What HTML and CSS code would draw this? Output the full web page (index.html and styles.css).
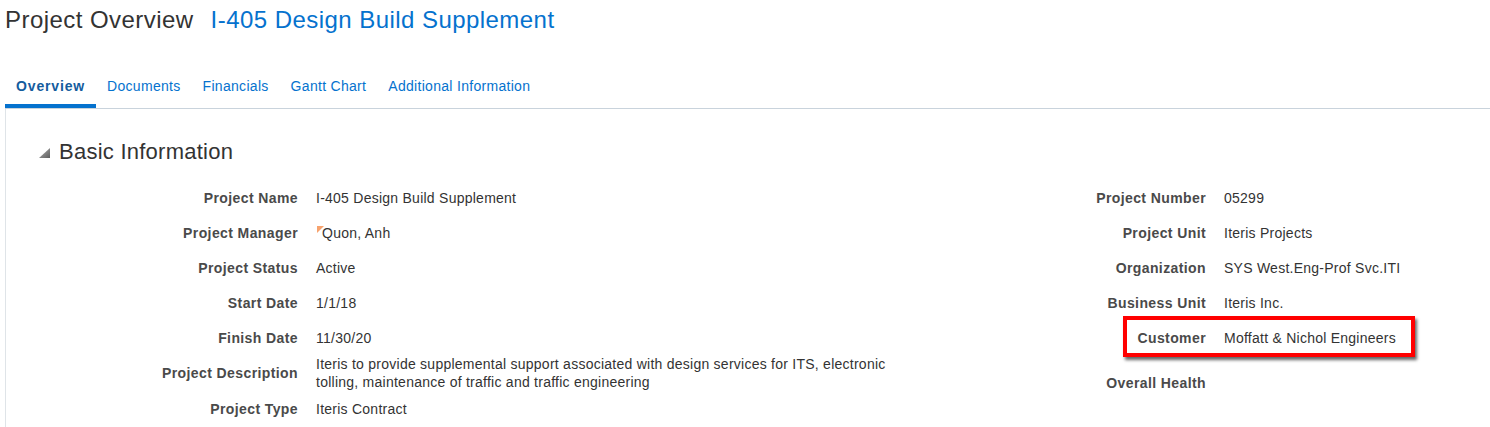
FILE: index.html
```html
<!DOCTYPE html>
<html lang="en">
<head>
    <meta charset="UTF-8">
    <title>Project Overview</title>
    <link rel="stylesheet" href="styles.css">
</head>
<body>
    <header class="page-header">
        <h1><span class="page-title">Project Overview</span><span class="project-title">I-405 Design Build Supplement</span></h1>
    </header>
    <nav class="tabs">
        <a href="#" class="tab active">Overview</a>
        <a href="#" class="tab">Documents</a>
        <a href="#" class="tab">Financials</a>
        <a href="#" class="tab">Gantt Chart</a>
        <a href="#" class="tab">Additional Information</a>
    </nav>
    <div class="panel">
        <h2 class="section-title">
            <svg class="disclosure" width="11" height="10" viewBox="0 0 11 10">
                <defs>
                    <linearGradient id="tri" x1="0" y1="0" x2="1" y2="1">
                        <stop offset="0" stop-color="#b0b0b0"/>
                        <stop offset="1" stop-color="#5e5e5e"/>
                    </linearGradient>
                </defs>
                <polygon points="11,0 11,10 0,10" fill="url(#tri)"/>
            </svg>
            Basic Information
        </h2>
        <div class="columns">
            <div class="form left">
                <div class="row"><div class="label">Project Name</div><div class="value">I-405 Design Build Supplement</div></div>
                <div class="row"><div class="label">Project Manager</div><div class="value"><svg class="flag" width="7" height="7" viewBox="0 0 7 7"><polygon points="0,0 7,0 0,7" fill="#f7a36e"/></svg>Quon, Anh</div></div>
                <div class="row"><div class="label">Project Status</div><div class="value">Active</div></div>
                <div class="row"><div class="label">Start Date</div><div class="value">1/1/18</div></div>
                <div class="row"><div class="label">Finish Date</div><div class="value">11/30/20</div></div>
                <div class="row desc"><div class="label">Project Description</div><div class="value">Iteris to provide supplemental support associated with design services for ITS, electronic tolling, maintenance of traffic and traffic engineering</div></div>
                <div class="row"><div class="label">Project Type</div><div class="value">Iteris Contract</div></div>
            </div>
            <div class="form right">
                <div class="row"><div class="label">Project Number</div><div class="value">05299</div></div>
                <div class="row"><div class="label">Project Unit</div><div class="value">Iteris Projects</div></div>
                <div class="row"><div class="label">Organization</div><div class="value">SYS West.Eng-Prof Svc.ITI</div></div>
                <div class="row"><div class="label">Business Unit</div><div class="value">Iteris Inc.</div></div>
                <div class="row highlighted"><div class="label">Customer</div><div class="value">Moffatt &amp; Nichol Engineers</div><div class="callout"></div></div>
                <div class="row health"><div class="label">Overall Health</div><div class="value"></div></div>
            </div>
        </div>
    </div>
</body>
</html>
```

FILE: styles.css
```css
body {
    margin: 0;
    padding: 0;
    font-family: "Liberation Sans", Arial, sans-serif;
    font-size: 14px;
    color: #333;
    background: #fff;
}

.page-header h1 {
    margin: 0;
    padding: 6px 0 0 5px;
    font-size: 24px;
    line-height: 28px;
    font-weight: normal;
    letter-spacing: 0.45px;
}

.page-title {
    color: #333;
    margin-right: 17px;
}

.project-title {
    color: #0572ce;
}

.tabs {
    display: flex;
    margin: 35px 0 0 5px;
    border-bottom: 1px solid #c9d3dc;
}

.tab {
    padding: 8px 11px 9px;
    line-height: 18px;
    font-size: 14px;
    letter-spacing: 0.3px;
    color: #0572ce;
    text-decoration: none;
    border-bottom: 4px solid transparent;
}

.tab.active {
    font-weight: bold;
    letter-spacing: 0.85px;
    color: #145c9e;
    border-bottom-color: #0572ce;
}

.panel {
    margin-left: 5px;
    border-left: 1px solid #dfe4e8;
    padding-top: 29px;
    min-height: 289px;
}

.section-title {
    display: flex;
    align-items: center;
    margin: 0 0 14px 0;
    padding-left: 33px;
    font-size: 22px;
    line-height: 28px;
    font-weight: normal;
    letter-spacing: 0.25px;
    color: #333;
}

.disclosure {
    margin-right: 9px;
    margin-top: 1px;
}

.columns {
    display: flex;
}

.form.left {
    width: 1000px;
}

.row {
    display: flex;
    align-items: center;
    gap: 18px;
    min-height: 35px;
    position: relative;
}

.label {
    flex: none;
    text-align: right;
    font-weight: bold;
    letter-spacing: 0.4px;
    color: #4a4a4a;
}

.left .label {
    width: 292px;
}

.right .label {
    width: 200px;
}

.value {
    color: #333;
    letter-spacing: 0.25px;
}

.desc {
    min-height: 36px;
}

.desc .value {
    max-width: 590px;
    line-height: 18px;
}

.flag {
    vertical-align: top;
    margin-top: 1px;
    margin-left: 1px;
    margin-right: -2px;
}

.health {
    padding-top: 10px;
}

.callout {
    position: absolute;
    left: 117px;
    top: -4px;
    width: 284px;
    height: 33px;
    border: 4px solid #f00;
    box-shadow: 2px 3px 3px rgba(0, 0, 0, 0.6);
}
```
